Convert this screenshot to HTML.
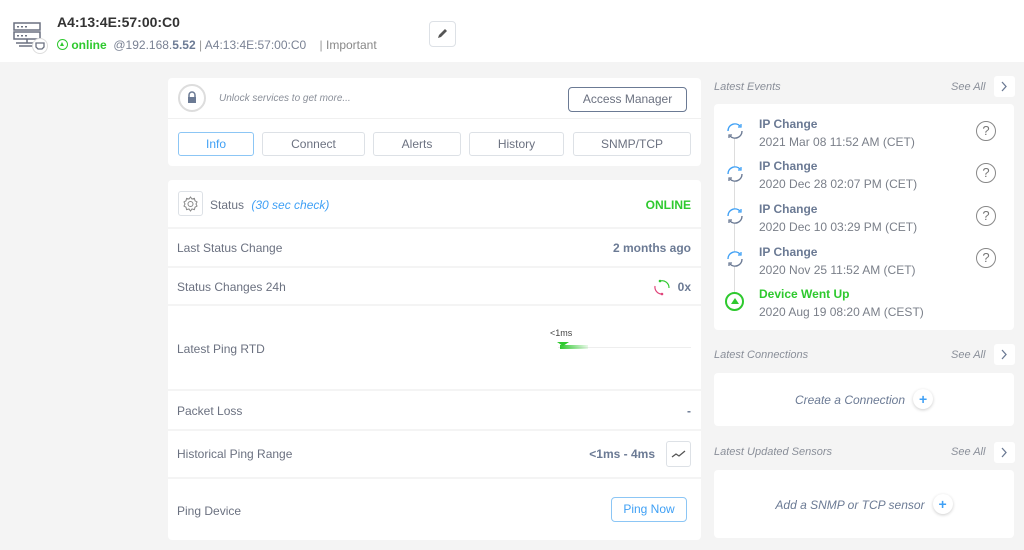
<!DOCTYPE html>
<html><head><style>
*{box-sizing:border-box;margin:0;padding:0}
body{width:1024px;height:550px;background:#f4f4f4;font-family:"Liberation Sans",sans-serif;position:relative;overflow:hidden;color:#6b7180}
.a{position:absolute}
.hdr{left:0;top:0;width:1024px;height:62px;background:#fff}
.card{background:#fff;border-radius:4px}
.tab{position:absolute;top:132px;height:24px;border:1px solid #dde1e6;border-radius:3px;font-size:12px;color:#6b7180;text-align:center;line-height:22px}
.row{position:absolute;left:168px;width:533px;background:#fff;font-size:12px;color:#6b7180}
.row .l{position:absolute;left:9px}
.row .r{position:absolute;right:10px;font-weight:bold;color:#6b7a94}
.ev{position:absolute;left:759px;font-size:12px}
.ev b{color:#6b7a94;display:block}
.ev span{color:#7a7f89;display:block;margin-top:4px}
.q{position:absolute;left:976px;width:20px;height:20px;border:1.5px solid #888;border-radius:50%;font-size:13px;text-align:center;line-height:17px;color:#777}
.lbl{position:absolute;font-size:11px;font-style:italic;color:#8a8f99}
.arrow{position:absolute;left:994px;width:21px;height:21px;background:#fff;border-radius:3px}
.plus{display:inline-block;width:20px;height:20px;border-radius:50%;background:#fff;box-shadow:0 1px 3px rgba(0,0,0,.2);color:#3fa0f5;font-style:normal;font-weight:bold;text-align:center;line-height:20px;margin-left:8px;font-size:14px}
</style></head><body>
<div class="a hdr"></div>
<svg class="a" style="left:13px;top:22px" width="36" height="32" viewBox="0 0 36 32"><rect x="1" y="1" width="26" height="7" fill="none" stroke="#6b7180" stroke-width="1.5"/><rect x="1" y="10" width="26" height="7" fill="none" stroke="#6b7180" stroke-width="1.5"/><g fill="#6b7180"><rect x="4" y="4" width="2" height="1.5"/><rect x="8" y="4" width="2" height="1.5"/><rect x="12" y="4" width="2" height="1.5"/><rect x="4" y="13" width="2" height="1.5"/><rect x="8" y="13" width="2" height="1.5"/><rect x="12" y="13" width="2" height="1.5"/></g><path d="M14 17v4M3 21h18M6 24h14" stroke="#6b7180" stroke-width="1.5"/><circle cx="27" cy="24" r="7.5" fill="#fff" stroke="#ddd"/><path d="M23 21h8v4l-2 2h-4l-2-2z" fill="none" stroke="#6b7180" stroke-width="1.3"/></svg>
<div class="a" style="left:57px;top:14px;font-size:14px;font-weight:bold;color:#333">A4:13:4E:57:00:C0</div>
<div class="a" style="left:57px;top:38px;font-size:12px;white-space:nowrap"><span style="display:inline-block;width:11px;height:11px;border:1.5px solid #2ec92e;border-radius:50%;vertical-align:-1px;position:relative"><span style="position:absolute;left:2px;top:2px;border-left:2.5px solid transparent;border-right:2.5px solid transparent;border-bottom:4px solid #2ec92e"></span></span> <b style="color:#2ec92e">online</b>&nbsp;&nbsp;<span style="color:#7a8294">@192.168.<b style="color:#6b7a94">5.52</b></span> <span style="color:#999">|</span> <span style="color:#7a8294">A4:13:4E:57:00:C0</span>&nbsp;&nbsp;&nbsp;&nbsp;<span style="color:#999">|</span> <span style="color:#888">Important</span></div>
<div class="a" style="left:429px;top:21px;width:27px;height:26px;border:1px solid #dde1e6;border-radius:4px;background:#fff"><svg width="25" height="24"><path d="M8 16l1-3 6-6 2 2-6 6z" fill="#555"/></svg></div>

<div class="a card" style="left:168px;top:78px;width:533px;height:88px"></div>
<div class="a" style="left:168px;top:118px;width:533px;height:1px;background:#f0f0f0"></div>
<div class="a" style="left:178px;top:84px;width:28px;height:28px;border:2px solid #ddd;border-radius:50%"><svg width="24" height="24"><path d="M9 11v-2a3 3 0 0 1 6 0v2" stroke="#6b7a94" stroke-width="1.5" fill="none"/><rect x="8" y="11" width="8" height="6" fill="#6b7a94"/></svg></div>
<div class="a" style="left:219px;top:93px;font-size:10px;font-style:italic;color:#8a8f99">Unlock services to get more...</div>
<div class="a" style="left:568px;top:87px;width:119px;height:25px;border:1px solid #6b7a94;border-radius:4px;font-size:12px;color:#6b7180;text-align:center;line-height:23px">Access Manager</div>
<div class="tab" style="left:178px;width:76px;border-color:#8cc6f5;color:#3fa0f5">Info</div>
<div class="tab" style="left:262px;width:103px">Connect</div>
<div class="tab" style="left:373px;width:88px">Alerts</div>
<div class="tab" style="left:469px;width:95px">History</div>
<div class="tab" style="left:573px;width:118px">SNMP/TCP</div>

<div class="row" style="top:180px;height:47px;border-radius:4px 4px 0 0"><div style="position:absolute;left:10px;top:11px;width:25px;height:25px;border:1px solid #dde1e6;border-radius:3px"><svg width="23" height="23"><path d="M11.5 5l1.5 2 2.4-.6.6 2.4 2 1.2-1 2 1 2-2 1.2-.6 2.4-2.4-.6-1.5 2-1.5-2-2.4.6-.6-2.4-2-1.2 1-2-1-2 2-1.2.6-2.4 2.4.6z" fill="none" stroke="#888" stroke-width="1"/><circle cx="11.5" cy="12" r="2.5" fill="none" stroke="#888"/></svg></div><span class="l" style="left:42px;top:18px">Status <i style="color:#3fa0f5;margin-left:4px">(30 sec check)</i></span><span class="r" style="top:18px;color:#2ec92e">ONLINE</span></div>
<div class="row" style="top:229px;height:37px"><span class="l" style="top:12px">Last Status Change</span><span class="r" style="top:12px">2 months ago</span></div>
<div class="row" style="top:268px;height:36px"><span class="l" style="top:12px">Status Changes 24h</span><svg style="position:absolute;left:484px;top:9px" width="20" height="20"><path d="M8 4a7 7 0 0 1 9 7" stroke="#2ec92e" fill="none" stroke-width="1.2"/><path d="M3 9a7 7 0 0 0 6 8" stroke="#e0457b" fill="none" stroke-width="1.2"/><circle cx="8" cy="4" r="1.3" fill="#2ec92e"/><circle cx="10" cy="17" r="1.3" fill="#e0457b"/></svg><span class="r" style="top:12px">0x</span></div>
<div class="row" style="top:306px;height:83px"><span class="l" style="top:36px">Latest Ping RTD</span><span style="position:absolute;left:382px;top:22px;font-size:9px;color:#444">&lt;1ms</span><div style="position:absolute;left:390px;top:41px;width:133px;height:1px;background:#eee"></div><div style="position:absolute;left:392px;top:39px;width:28px;height:4px;background:linear-gradient(90deg,#2ec92e,rgba(46,201,46,.1))"></div><div style="position:absolute;left:389px;top:36px;border-left:6px solid transparent;border-right:6px solid transparent;border-top:4px solid #2ec92e"></div></div>
<div class="row" style="top:391px;height:38px"><span class="l" style="top:13px">Packet Loss</span><span class="r" style="top:13px">-</span></div>
<div class="row" style="top:431px;height:46px"><span class="l" style="top:16px">Historical Ping Range</span><span class="r" style="top:16px;right:46px">&lt;1ms - 4ms</span><div style="position:absolute;left:498px;top:10px;width:25px;height:26px;border:1px solid #dde1e6;border-radius:3px"><svg width="23" height="24"><path d="M5 15l4-3 3 2 6-5" stroke="#555" fill="none" stroke-width="1.3"/></svg></div></div>
<div class="row" style="top:479px;height:61px;border-radius:0 0 4px 4px"><span class="l" style="top:25px">Ping Device</span><div style="position:absolute;left:443px;top:18px;width:76px;height:25px;border:1px solid #8cc6f5;border-radius:4px;color:#3fa0f5;text-align:center;line-height:23px">Ping Now</div></div>

<svg width="0" height="0" style="position:absolute"><defs><g id="c"><circle cx="10" cy="10" r="7.5" fill="#fff"/><path d="M3 10a7 7 0 0 1 12-5" stroke="#3fa0f5" fill="none" stroke-width="1.4"/><path d="M17 10a7 7 0 0 1-12 5" stroke="#6b7a94" fill="none" stroke-width="1.4"/><path d="M16 3v3h-3" stroke="#3fa0f5" fill="none" stroke-width="1.3"/><path d="M4 17v-3h3" stroke="#6b7a94" fill="none" stroke-width="1.3"/></g><path id="ch" d="M8 6l4 4.5-4 4.5" stroke="#6b7a94" fill="none" stroke-width="1.3"/></defs></svg>

<div class="lbl" style="left:714px;top:81px">Latest Events</div>
<div class="lbl" style="left:951px;top:81px">See All</div>
<div class="arrow" style="top:76px"><svg width="21" height="21"><use href="#ch"/></svg></div>
<div class="a card" style="left:714px;top:104px;width:300px;height:226px"></div>
<div class="a" style="left:734px;top:135px;width:1px;height:160px;background:#ddd"></div>
<svg class="a" style="left:725px;top:121px" width="20" height="160"><use href="#c" y="0"/><use href="#c" y="43"/><use href="#c" y="85"/><use href="#c" y="128"/></svg>
<div class="a" style="left:725px;top:292px;width:19px;height:19px;border:2px solid #2ec92e;border-radius:50%;background:#fff"><div style="position:absolute;left:3.5px;top:4px;border-left:4px solid transparent;border-right:4px solid transparent;border-bottom:6px solid #2ec92e"></div></div>
<div class="ev" style="top:117px"><b>IP Change</b><span>2021 Mar 08 11:52 AM (CET)</span></div>
<div class="ev" style="top:159px"><b>IP Change</b><span>2020 Dec 28 02:07 PM (CET)</span></div>
<div class="ev" style="top:202px"><b>IP Change</b><span>2020 Dec 10 03:29 PM (CET)</span></div>
<div class="ev" style="top:245px"><b>IP Change</b><span>2020 Nov 25 11:52 AM (CET)</span></div>
<div class="ev" style="top:287px"><b style="color:#2ec92e">Device Went Up</b><span>2020 Aug 19 08:20 AM (CEST)</span></div>
<div class="q" style="top:121px">?</div><div class="q" style="top:163px">?</div><div class="q" style="top:206px">?</div><div class="q" style="top:248px">?</div>

<div class="lbl" style="left:714px;top:349px">Latest Connections</div>
<div class="lbl" style="left:951px;top:349px">See All</div>
<div class="arrow" style="top:344px"><svg width="21" height="21"><use href="#ch"/></svg></div>
<div class="a card" style="left:714px;top:373px;width:300px;height:53px;text-align:center;padding-top:16px;font-size:12px;font-style:italic;color:#6b7a94">Create a Connection<i class="plus">+</i></div>

<div class="lbl" style="left:714px;top:446px">Latest Updated Sensors</div>
<div class="lbl" style="left:951px;top:446px">See All</div>
<div class="arrow" style="top:442px"><svg width="21" height="21"><use href="#ch"/></svg></div>
<div class="a card" style="left:714px;top:470px;width:300px;height:68px;text-align:center;padding-top:24px;font-size:12px;font-style:italic;color:#6b7a94">Add a SNMP or TCP sensor<i class="plus">+</i></div>
</body></html>
